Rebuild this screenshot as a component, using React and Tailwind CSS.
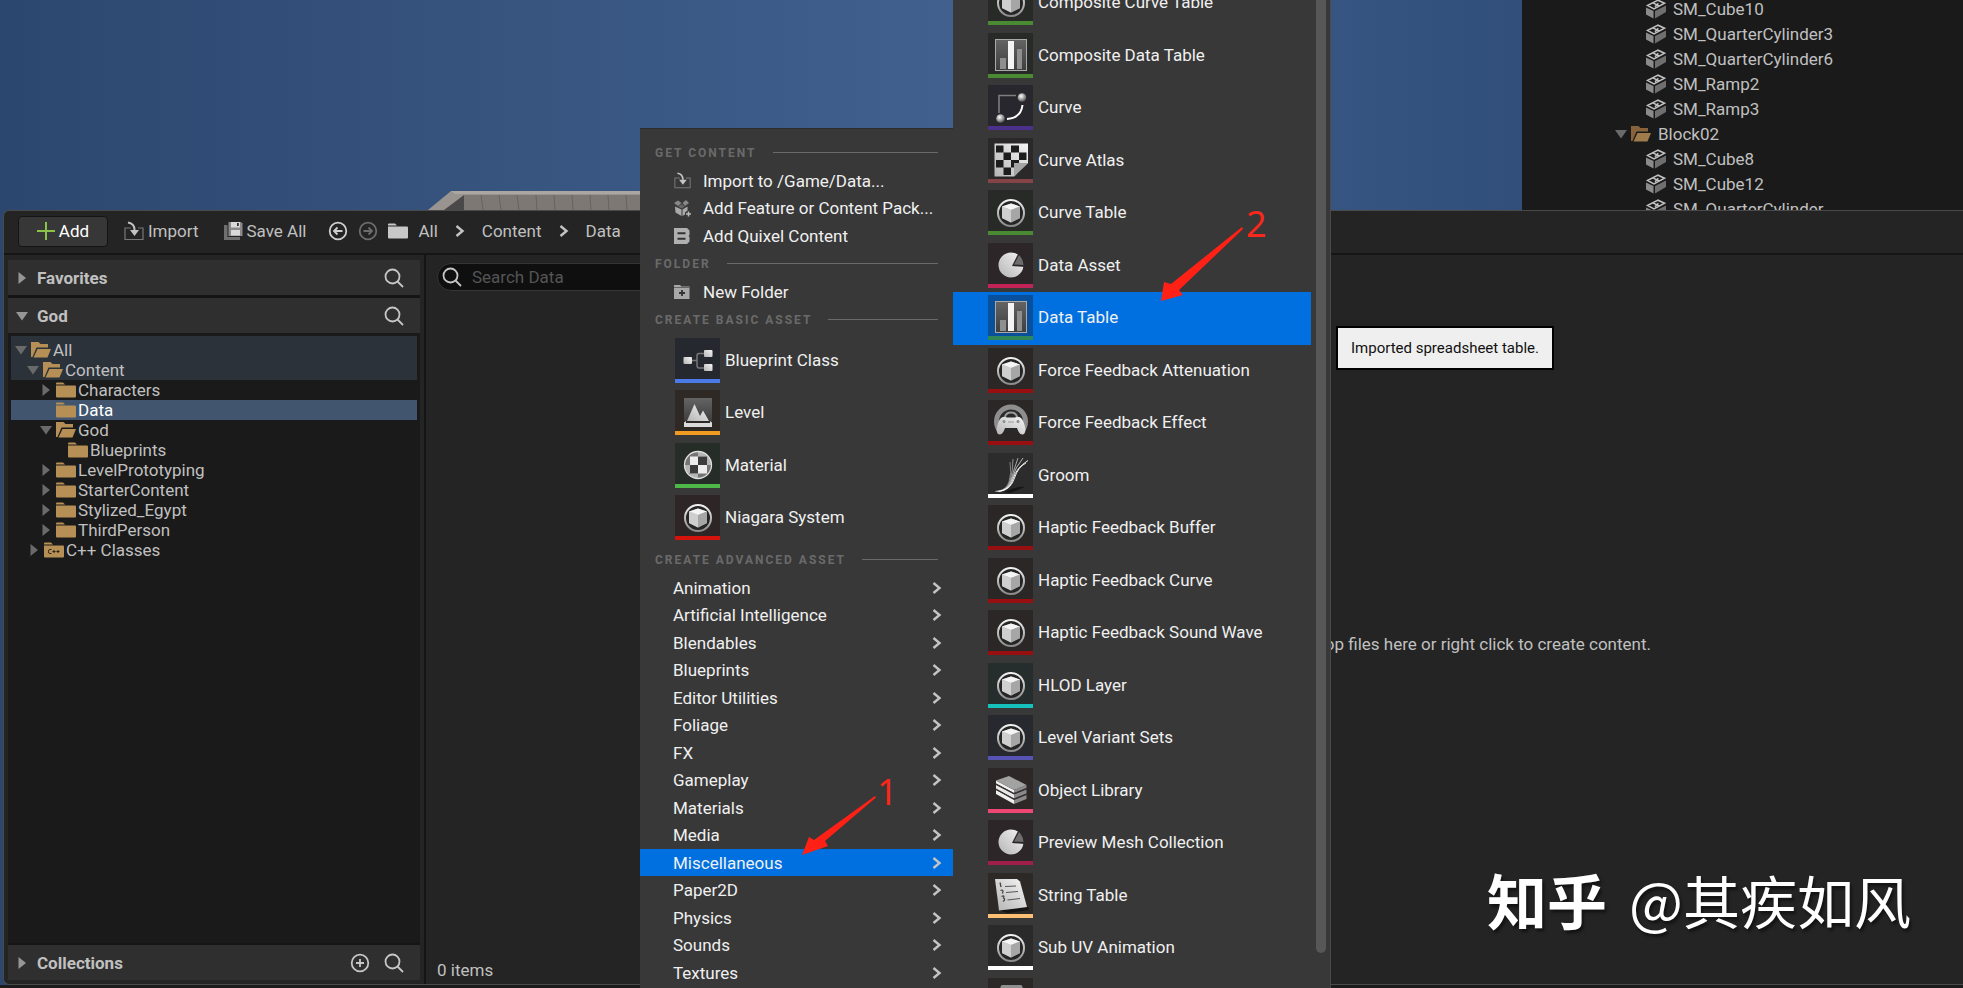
import React from "react";

const treeRows = [
  { name: "All", pad: "pl-1", state: "open", row: "h-6 pt-1 bg-[#2b323a]" },
  { name: "Content", pad: "pl-4", state: "open", row: "h-5 bg-[#2b323a]" },
  { name: "Characters", pad: "pl-[29px]", state: "closed", row: "h-5" },
  { name: "Data", pad: "pl-[29px]", state: "none", row: "h-5 bg-[#41566e] text-white" },
  { name: "God", pad: "pl-[29px]", state: "open", row: "h-5" },
  { name: "Blueprints", pad: "pl-[41px]", state: "none", row: "h-5" },
  { name: "LevelPrototyping", pad: "pl-[29px]", state: "closed", row: "h-5" },
  { name: "StarterContent", pad: "pl-[29px]", state: "closed", row: "h-5" },
  { name: "Stylized_Egypt", pad: "pl-[29px]", state: "closed", row: "h-5" },
  { name: "ThirdPerson", pad: "pl-[29px]", state: "closed", row: "h-5" },
  { name: "C++ Classes", pad: "pl-[17px]", state: "closed", row: "h-5", cpp: true },
];

const outlinerRows = [
  "SM_Cube10",
  "SM_QuarterCylinder3",
  "SM_QuarterCylinder6",
  "SM_Ramp2",
  "SM_Ramp3",
  "Block02",
  "SM_Cube8",
  "SM_Cube12",
  "SM_QuarterCylinder",
];

const basicAssets = [
  { name: "Blueprint Class", glyph: "blueprint", color: "#4a7be8", bg: "#26282f" },
  { name: "Level", glyph: "level", color: "#f09c22", bg: "#2f2926" },
  { name: "Material", glyph: "material", color: "#4db748", bg: "#262c28" },
  { name: "Niagara System", glyph: "cube", color: "#d4140c", bg: "#2e2526" },
];

const advancedAssets = [
  "Animation",
  "Artificial Intelligence",
  "Blendables",
  "Blueprints",
  "Editor Utilities",
  "Foliage",
  "FX",
  "Gameplay",
  "Materials",
  "Media",
  "Miscellaneous",
  "Paper2D",
  "Physics",
  "Sounds",
  "Textures",
];

const miscAssets = [
  { name: "Composite Curve Table", glyph: "cube", color: "#4a8a33", bg: "#272a27" },
  { name: "Composite Data Table", glyph: "chart", color: "#4a8a33", bg: "#272a27" },
  { name: "Curve", glyph: "curve", color: "#4b308c", bg: "#28272d" },
  { name: "Curve Atlas", glyph: "atlas", color: "#844346", bg: "#2a2828" },
  { name: "Curve Table", glyph: "cube", color: "#4a8a33", bg: "#272a27" },
  { name: "Data Asset", glyph: "pie", color: "#c22458", bg: "#2c2628" },
  { name: "Data Table", glyph: "chart", color: "#2f8659", bg: "#08509b" },
  { name: "Force Feedback Attenuation", glyph: "cube", color: "#980f12", bg: "#2b2727" },
  { name: "Force Feedback Effect", glyph: "gamepad", color: "#980f12", bg: "#2b2727" },
  { name: "Groom", glyph: "groom", color: "#ffffff", bg: "#2c2c2c" },
  { name: "Haptic Feedback Buffer", glyph: "cube", color: "#980f12", bg: "#2b2727" },
  { name: "Haptic Feedback Curve", glyph: "cube", color: "#980f12", bg: "#2b2727" },
  { name: "Haptic Feedback Sound Wave", glyph: "cube", color: "#980f12", bg: "#2b2727" },
  { name: "HLOD Layer", glyph: "cube", color: "#17c1bb", bg: "#262d2d" },
  { name: "Level Variant Sets", glyph: "cube", color: "#5653b5", bg: "#28282f" },
  { name: "Object Library", glyph: "stack", color: "#ee4773", bg: "#2e2728" },
  { name: "Preview Mesh Collection", glyph: "pie", color: "#a01f4a", bg: "#2c2628" },
  { name: "String Table", glyph: "paper", color: "#fcbf74", bg: "#2d2926" },
  { name: "Sub UV Animation", glyph: "cube", color: "#ffffff", bg: "#2a2a2a" },
  { name: "", glyph: "block", color: "#ffffff", bg: "#2c2727" },
];

const glyphs = {
  cube: (
    <>
      <circle cx="23" cy="23" r="13" fill="#262626" stroke="url(#ring)" strokeWidth="2" />
      <path d="M23 13.5 32 16.5V28L23 32.5 14 28V16.5Z" fill="#b9b9b9" />
      <path d="M23 13.5 32 16.5 23 20 14 16.5Z" fill="#f4f4f4" />
      <path d="M14 16.5 23 20V32.5L14 28Z" fill="#cfcfcf" />
      <path d="M32 16.5 23 20V32.5L32 28Z" fill="#a6a6a6" />
    </>
  ),
  chart: (
    <>
      <rect x="7.5" y="6.5" width="31" height="31" fill="url(#panel)" stroke="#a9a9a9" />
      <rect x="12" y="25" width="6" height="11" fill="#8f8f8f" />
      <rect x="20" y="8" width="6" height="28" fill="#f4f4f4" />
      <rect x="29" y="16" width="5" height="20" fill="#8f8f8f" />
    </>
  ),
  curve: (
    <>
      <path d="M11 28V10.5H28" fill="none" stroke="#7d7d7d" strokeWidth="1.6" />
      <path d="M19 34Q33 33 34.5 20" fill="none" stroke="#fff" strokeWidth="2" />
      <circle cx="34" cy="12.5" r="4.3" fill="url(#ball)" />
      <circle cx="12.5" cy="33.5" r="4.3" fill="url(#ball)" />
    </>
  ),
  atlas: (
    <>
      <path d="M6.5 5.5H40V25L26 38.5H6.5Z" fill="url(#sheet)" />
      <path d="M8 7.5h7.5v7H8zM23 7.5h8v7h-8zM15.5 14.5H23V22h-7.5zM31 14.5h7.5V22H31zM8 22h7.5v7.5H8zM23 22h8v7.5h-8zM15.5 29.5H23V37h-7.5z" fill="#1d1d1d" />
      <path d="M26 38.5V25H40Z" fill="#a5a5a5" />
    </>
  ),
  pie: (
    <>
      <circle cx="23" cy="22" r="12.5" fill="url(#sheet)" />
      <path d="M24 23 31 9 37 13V24Z" fill="#2b2628" />
      <path d="M26 21.5 31 12Q35 16 35.5 22Z" fill="#6d6d6d" />
    </>
  ),
  gamepad: (
    <>
      <circle cx="23" cy="21.5" r="14.5" fill="#2a2a2a" stroke="#8e8e8e" strokeWidth="5" />
      <path d="M8 31H38V41H8Z" fill="#2b2727" />
      <path d="M17 17Q18 12.5 23 12.5T29 17" fill="none" stroke="#9a9a9a" strokeWidth="2" />
      <path d="M13 18Q16 16 19 17.5H27Q30 16 33 18Q36 21 37.5 29Q37.5 34.5 34 34.5Q31 34 29 28H17Q15 34 12 34.5Q8.5 34.5 8.5 29Q10 21 13 18Z" fill="url(#sheet)" />
      <circle cx="16" cy="21.5" r="1.5" fill="#8c8c8c" />
      <circle cx="30" cy="21.5" r="1.5" fill="#8c8c8c" />
      <path d="M20 22h6" stroke="#9b9b9b" />
    </>
  ),
  groom: (
    <g fill="none">
      <path d="M16 39Q27 33 37 34Q30 37 22 40Z" fill="#161616" />
      <path d="M7 38.5Q18 38 21 29T22 9" stroke="#999" strokeWidth=".8" />
      <path d="M8 38.5Q19 38 22 28T25 6" stroke="#aaa" strokeWidth=".8" />
      <path d="M9 38.5Q20 38 23 27T30 5" stroke="#c4c4c4" strokeWidth=".8" />
      <path d="M10 38.5Q21 37.5 24 26T35 5" stroke="#ddd" strokeWidth=".8" />
      <path d="M11 38.5Q22 37 25 26T40 7.5" stroke="#fff" strokeWidth=".9" />
      <path d="M13 38Q23 36 26.5 25T38 10" stroke="#fff" strokeWidth=".9" />
    </g>
  ),
  stack: (
    <>
      <path d="M8 26 26 36V32L8 22Z" fill="#efefef" />
      <path d="M26 36 38.5 31V27L26 32Z" fill="#8a8a8a" />
      <path d="M8 20.5 26 30.5V26.5L8 17Z" fill="#e8e8e8" />
      <path d="M26 30.5 38.5 25.5V21.5L26 26.5Z" fill="#8a8a8a" />
      <path d="M8 15.5 26 25V22L8 12.5Z" fill="#f1f1f1" />
      <path d="M26 25 38.5 20V17L26 22Z" fill="#8a8a8a" />
      <path d="M8 12.5 21 8 38.5 17 26 22Z" fill="#a2a2a2" />
      <path d="M8 16 26 25.5 38.5 20.5M8 21.5 26 31 38.5 26" fill="none" stroke="#3a3536" />
    </>
  ),
  paper: (
    <>
      <path d="M11 37.5 40 34 41 37 20 40Z" fill="#151515" />
      <path d="M7 6H29L32 8.5 39 34 11 37.5Z" fill="url(#sheet)" />
      <path d="M17 13.5 28 13M18 19.5 30 18.5M19.5 27 32 25.5" stroke="#555" />
      <path d="M12 9.5 13 14M12.5 17.5Q16 16 14.5 20.5M13.5 23.5Q17 22 15.5 25Q18 26.5 15 28.5" fill="none" stroke="#444" strokeWidth="1.3" />
    </>
  ),
  blueprint: (
    <>
      <path d="M17 22.5H22M30 15.5H24Q22 15.5 22 18V27Q22 30 24 30H30" fill="none" stroke="#777" strokeWidth="1.5" />
      <rect x="8.5" y="19" width="8.5" height="7" rx="1" fill="url(#sheet)" />
      <rect x="29" y="12" width="8.5" height="7" rx="1" fill="url(#sheet)" />
      <rect x="29" y="26" width="8.5" height="7" rx="1" fill="url(#sheet)" />
    </>
  ),
  level: (
    <>
      <rect x="9" y="8" width="28" height="23" fill="url(#panel)" />
      <path d="M12 31 19.5 14 25 26 28 20.5 34 31Z" fill="url(#sheet)" />
      <path d="M9 32.5 11 31V33H35V31L37 32.5V37H9Z" fill="#dadada" />
    </>
  ),
  material: (
    <>
      <clipPath id="sphere">
        <circle cx="23" cy="22" r="13.5" />
      </clipPath>
      <g clipPath="url(#sphere)">
        <rect x="9" y="8" width="28" height="28" fill="#747474" />
        <path d="M15 13.5h8V22h-8zM23 22h9v8.5h-9z" fill="#ededed" />
        <path d="M23 13.5h9V22h-9zM15 22h8v8.5h-8z" fill="#3c3c3c" />
        <path d="M9 22h6v8.5H9zM23 8h9v5.5h-9zM15 30.5h8V36h-8zM32 13.500h6V22h-6z" fill="#b5b5b5" />
      </g>
      <circle cx="23" cy="22" r="13.5" fill="none" stroke="#dedede" strokeWidth="1.3" />
    </>
  ),
  block: <rect x="12.5" y="7" width="22" height="30" rx="2" fill="#8f8f8f" />,
};

const Thumb = ({ glyph, color, bg }) => (
  <svg width="45" height="45" viewBox="0 0 45 45" className="shrink-0" aria-hidden="true">
    <rect width="45" height="45" fill={bg} />
    {glyphs[glyph]}
    <rect y="41" width="45" height="4" fill={color} />
  </svg>
);

// shared gradients for the asset glyphs
const Gradients = () => (
  <svg className="absolute size-0" aria-hidden="true">
    <defs>
      <linearGradient id="ring" x1="0" y1="0" x2="0" y2="1">
        <stop offset="0" stopColor="#f2f2f2" />
        <stop offset="1" stopColor="#8a8a8a" />
      </linearGradient>
      <linearGradient id="panel" x1="0" y1="0" x2="0" y2="1">
        <stop offset="0" stopColor="#646464" />
        <stop offset="1" stopColor="#3e3e3e" />
      </linearGradient>
      <linearGradient id="sheet" x1="1" y1="0" x2="0" y2="1">
        <stop offset="0" stopColor="#f6f6f6" />
        <stop offset="1" stopColor="#b4b4b4" />
      </linearGradient>
      <radialGradient id="ball" cx=".4" cy=".35" r=".7">
        <stop offset="0" stopColor="#fff" />
        <stop offset="1" stopColor="#4a4a4a" />
      </radialGradient>
    </defs>
  </svg>
);

const Triangle = ({ state, color = "#6a6a6a" }) => (
  <svg width="12" height="12" viewBox="0 0 12 12" className="shrink-0" aria-hidden="true">
    {state === "open" && <path d="M0 2H12L6 10.5Z" fill={color} />}
    {state === "closed" && <path d="M2.5 0 10 6 2.5 12Z" fill={color} />}
  </svg>
);

const Folder = ({ open, cpp, color = "#b58f55", back = "#b58f55" }) => (
  <svg width="20" height="16" viewBox="0 0 20 16" className="shrink-0" aria-hidden="true">
    {open ? (
      <>
        <path d="M0 15V0H7.5L9.5 2H17V5.5H5.5L1.5 15Z" fill={back} />
        <path d="M6.5 7H20L16.5 15.5H2.5Z" fill={color} />
      </>
    ) : (
      <>
        <path d="M0 2.5V1.5Q0 .5 1 .5H7L9 2.5Z" fill={color} />
        <path d="M0 3.5H19Q20 3.5 20 4.5V14.5Q20 15.5 19 15.5H1Q0 15.5 0 14.5Z" fill={color} />
      </>
    )}
    {cpp && (
      <path
        d="M7.5 7.5H5.5Q4.5 7.5 4.5 9.5T5.5 11.500H7.5M8.5 9.5h3M10 8v3M12.500 9.5h3M14 8v3"
        fill="none"
        stroke="#2b2113"
      />
    )}
  </svg>
);

const SearchIcon = () => (
  <svg width="20" height="20" viewBox="0 0 20 20" fill="none" stroke="#c6c6c6" strokeWidth="1.8" aria-hidden="true">
    <circle cx="8.5" cy="8.5" r="7" />
    <path d="M13.5 13.5 19 19" />
  </svg>
);

const CircleArrow = ({ flip, color }) => (
  <svg width="20" height="20" viewBox="0 0 20 20" fill="none" stroke={color} strokeWidth="1.8" aria-hidden="true">
    <circle cx="10" cy="10" r="8.3" />
    {flip ? <path d="M5.5 10H14M10.5 6.5 14 10 10.5 13.5" /> : <path d="M14.5 10H6M9.5 6.5 6 10 9.5 13.5" />}
  </svg>
);

const Chevron = () => (
  <svg width="10" height="12" viewBox="0 0 10 12" fill="none" stroke="#c4c4c4" strokeWidth="2.4" className="shrink-0" aria-hidden="true">
    <path d="M1.5 1 7.5 6 1.5 11" />
  </svg>
);

const ImportIcon = ({ size }) => (
  <svg width={size} height={size} viewBox="0 0 20 20" fill="none" className="shrink-0" aria-hidden="true">
    <path d="M7 7H1V18.5H19V7H14" stroke="#777" strokeWidth="1.2" />
    <path d="M4 1.5Q10.5 2.5 10.5 9" stroke="#c4c4c4" strokeWidth="2" />
    <path d="M6 9H15L10.5 15Z" fill="#c4c4c4" />
  </svg>
);

const SaveIcon = () => (
  <svg width="19" height="20" viewBox="0 0 19 20" aria-hidden="true">
    <path d="M0 4H3.5V16H16V19H0Z" fill="#6f6f6f" />
    <path d="M4.5 1H17L18.5 2.5V15H4.5Z" fill="#8a8a8a" />
    <path d="M7 1H16V6.5H7ZM7 9H16V14.5H7Z" fill="#dadada" />
    <path d="M13 2h1.8v3H13z" fill="#333" />
  </svg>
);

const MeshIcon = () => (
  <svg width="20" height="20" viewBox="0 0 20 20" className="shrink-0" aria-hidden="true">
    <path d="M0 8.5 7.5 12V19.5L0 15.5Z" fill="#8b8b8b" />
    <path d="M9 12 20 6.500V13L9 19.5Z" fill="#6f6f6f" />
    <path d="M1.500 6.500 12 1.200 18.500 4.200 8 9.800ZM6.800 3.900 13.300 7M9 7.800 12.300 4.200" fill="none" stroke="#c0c0c0" strokeWidth="1.500" />
  </svg>
);

const PackIcon = () => (
  <svg width="17" height="17" viewBox="0 0 17 17" className="shrink-0" aria-hidden="true">
    <path d="M1 6.5 7.5 9.5V16L1.5 12.5ZM8.5 9.5 13.5 6.5V10.5L11 12.5V14.5L8.5 16Z" fill="#a9a9a9" />
    <path d="M0 3 4 .5 7.5 3 4 6ZM8.5 3 12 0 15 3 11 6Z" fill="#888" />
    <path d="M4 6.5 7.5 8.5 11 6.5 7.5 4Z" fill="#666" />
    <path d="M12 14h5M14.5 11.5v5" stroke="#bbb" strokeWidth="1.5" />
  </svg>
);

const QuixelIcon = () => (
  <svg width="16" height="16" viewBox="0 0 16 16" className="shrink-0" aria-hidden="true">
    <path d="M0 0H13L15.5 2.5V7L14.5 8 15.5 9V13.5L13 16H0Z" fill="#b0b0b0" />
    <path d="M3.5 5.3H11.5M3.5 10.7H11.5" stroke="#333" strokeWidth="2" />
  </svg>
);

const NewFolderIcon = () => (
  <svg width="16" height="16" viewBox="0 0 16 16" className="shrink-0" aria-hidden="true">
    <path d="M0 1H6L7.5 2.5H15.5V15H0Z" fill="#a8a8a8" />
    <path d="M0 3.5H15.5" stroke="#555" strokeWidth=".8" />
    <path d="M5 9h6M8 6v6" stroke="#333" strokeWidth="1.8" />
  </svg>
);

const Outliner = () => (
  <aside className="w-[441px] shrink-0 overflow-hidden bg-[#1a1a1a] pl-[93px]">
    <ul className="-mt-1">
      {outlinerRows.map((name) =>
        name === "Block02" ? (
          <li key={name} className="flex h-[25px] items-center">
            <Triangle state="open" />
            <span className="ml-1 mr-[7px] flex">
              <Folder open color="#a07b4b" back="#86633a" />
            </span>
            {name}
          </li>
        ) : (
          <li key={name} className="flex h-[25px] items-center gap-[7px] pl-[31px]">
            <MeshIcon />
            {name}
          </li>
        )
      )}
    </ul>
  </aside>
);

const Viewport = () => (
  <div className="flex flex-1 items-end overflow-hidden pl-[428px]">
    <svg width="230" height="20" viewBox="0 0 230 20" aria-hidden="true">
      <path d="M0 20 23 1H230V20Z" fill="#9a9490" />
      <path d="M16 20 36 5V20Z" fill="#4b4849" />
      <path d="M36 5H230V20H36Z" fill="#7d7873" />
      <path d="M53 5 55 20M71 5 73 20M89 5 91 20M108 5 109 20M126 5 127 20M144 5 145 20M162 5 163 20M180 5 181 20M198 5 199 20" stroke="#67635f" />
      <path d="M23 1H230V4H27Z" fill="#aca6a1" />
    </svg>
  </div>
);

const SectionHeader = ({ title, state, children }) => (
  <div className="flex h-[35px] items-center bg-[#2f2f2f] pl-2 pr-4">
    <button className="flex items-center gap-2 font-bold">
      <Triangle state={state} color="#969696" />
      <span className="pl-px">{title}</span>
    </button>
    <div className="ml-auto flex items-center gap-3.5">
      {children}
      <button aria-label={`Search ${title}`}>
        <SearchIcon />
      </button>
    </div>
  </div>
);

const Sidebar = () => (
  <aside className="flex w-[412px] shrink-0 flex-col bg-[#151515]">
    <SectionHeader title="Favorites" state="closed" />
    <div className="h-[3px]" />
    <SectionHeader title="God" state="open" />
    <ul className="flex-1 bg-[#1a1a1a] px-[3px] pt-[3px]">
      {treeRows.map((r) => (
        <li key={r.name} className={r.row}>
          <button className={`flex h-5 w-full items-center ${r.pad}`}>
            <Triangle state={r.state} />
            <span className="ml-1 mr-0.5 flex">
              <Folder open={r.state === "open"} cpp={r.cpp} />
            </span>
            {r.name}
          </button>
        </li>
      ))}
    </ul>
    <div className="h-0.5" />
    <SectionHeader title="Collections" state="closed">
      <button aria-label="Add collection">
        <svg width="20" height="20" viewBox="0 0 20 20" fill="none" stroke="#c6c6c6" strokeWidth="1.8" aria-hidden="true">
          <circle cx="10" cy="10" r="8.3" />
          <path d="M6 10h8M10 6v8" />
        </svg>
      </button>
    </SectionHeader>
  </aside>
);

const Toolbar = () => (
  <div className="flex h-11 shrink-0 items-center border-b-2 border-[#151515] pb-0.5 pl-3.5">
    <button className="flex h-[31px] w-[90px] items-center justify-center gap-1 rounded border border-[#141414] bg-[#373737] text-white">
      <svg width="18" height="18" viewBox="0 0 18 18" stroke="#8bc24a" strokeWidth="2" aria-hidden="true">
        <path d="M0 9H18M9 0V18" />
      </svg>
      Add
    </button>
    <button className="ml-4 flex items-center gap-1">
      <ImportIcon size="20" />
      Import
    </button>
    <button className="ml-[25px] flex items-center gap-1">
      <SaveIcon />
      Save All
    </button>
    <button className="ml-[22px]" aria-label="Back">
      <CircleArrow color="#d0d0d0" />
    </button>
    <button className="ml-2.5" aria-label="Forward">
      <CircleArrow flip color="#6c6c6c" />
    </button>
    <span className="ml-2.5">
      <Folder color="#c8c8c8" />
    </span>
    <nav className="flex items-center">
      <a href="#all" className="ml-2.5 mr-[17px]">All</a>
      <Chevron />
      <a href="#content" className="mx-[17px]">Content</a>
      <Chevron />
      <a href="#data" className="mx-[17px]">Data</a>
    </nav>
  </div>
);

const ContentBrowser = () => (
  <main className="mb-[3px] ml-[3px] flex min-h-0 flex-1 flex-col rounded-l-md border border-r-0 border-[#4a4a4a] bg-[#242424]">
    <Toolbar />
    <div className="flex min-h-0 flex-1 pl-1 pt-[5px]">
      <div className="flex pb-1">
        <Sidebar />
      </div>
      <section className="-mt-[5px] ml-1 flex flex-1 flex-col border-l-2 border-[#151515] pl-[11px]">
        <label className="mt-2 flex h-7 w-[600px] items-center gap-2.5 rounded-full border border-[#353535] bg-[#0f0f0f] px-1">
          <SearchIcon />
          <input
            type="text"
            aria-label="Search Data"
            placeholder="Search Data"
            className="flex-1 bg-transparent outline-none placeholder:text-[#555555]"
          />
        </label>
        <div className="flex flex-1 items-center justify-end pr-[312px] pt-[38px]">
          Drop files here or right click to create content.
        </div>
        <div className="pb-0.5 leading-6">0 items</div>
      </section>
    </div>
  </main>
);

const MenuHeading = ({ children }) => (
  <h3 className="flex h-[29px] items-center gap-4 px-[15px] text-xs font-bold tracking-[2px] text-[#6a6a6a]">
    {children}
    <span className="h-px flex-1 bg-[#6a6a6a]" />
  </h3>
);

const MenuItem = ({ icon, children }) => (
  <li className="odd:h-[27px] even:h-7">
    <button className="flex size-full items-center pl-[34px]">
      <span className="w-[29px]">{icon}</span>
      {children}
    </button>
  </li>
);

const AssetButton = ({ asset }) => (
  <button className="flex items-center gap-[5px]" aria-label={asset.name || "Asset"}>
    <Thumb {...asset} />
    <span className="pb-0.5">{asset.name}</span>
  </button>
);

const ContextMenu = () => (
  <div className="absolute bottom-0 left-[640px] top-32 w-[313px] overflow-hidden border-t border-[#2c2c2c] bg-[#383838] pt-[9px] text-[#f0f0f0]">
    <MenuHeading>GET CONTENT</MenuHeading>
    <ul>
      <MenuItem icon={<ImportIcon size="17" />}>Import to /Game/Data...</MenuItem>
      <MenuItem icon={<PackIcon />}>Add Feature or Content Pack...</MenuItem>
      <MenuItem icon={<QuixelIcon />}>Add Quixel Content</MenuItem>
    </ul>
    <MenuHeading>FOLDER</MenuHeading>
    <ul>
      <MenuItem icon={<NewFolderIcon />}>New Folder</MenuItem>
    </ul>
    <MenuHeading>CREATE BASIC ASSET</MenuHeading>
    <ul className="pt-px">
      {basicAssets.map((a) => (
        <li key={a.name} className="pl-[35px] pt-[3px] odd:h-[52px] even:h-[53px]">
          <AssetButton asset={a} />
        </li>
      ))}
    </ul>
    <MenuHeading>CREATE ADVANCED ASSET</MenuHeading>
    <ul>
      {advancedAssets.map((name) => (
        <li key={name} className={`odd:h-[27px] even:h-7 ${name === "Miscellaneous" ? "bg-[#0070e0]" : ""}`}>
          <button className="flex size-full items-center justify-between pl-[33px] pr-[11px]">
            {name}
            <Chevron />
          </button>
        </li>
      ))}
    </ul>
  </div>
);

const AssetSubmenu = () => (
  <div className="absolute inset-y-0 left-[953px] flex w-[378px] overflow-hidden border-r border-[#4a4a4a] bg-[#383838] text-[#f0f0f0]">
    <ul className="-mt-[23px] flex-1">
      {miscAssets.map((a) => (
        <li key={a.color + a.name} className={`pl-[35px] pt-[3px] odd:h-[53px] even:h-[52px] ${a.name === "Data Table" ? "bg-[#0070e0]" : ""}`}>
          <AssetButton asset={a} />
        </li>
      ))}
    </ul>
    <div className="mb-[35px] ml-[5px] mr-1 w-2.5 rounded-b-full bg-[#575757]" />
  </div>
);

const Annotations = () => (
  <>
    <svg className="absolute left-[800px] top-[794px]" width="78" height="62" viewBox="0 0 78 62" aria-hidden="true">
      <path d="M75 2 76 3.5 25 47 28 52 2 61 9 43 14 46Z" fill="#ff2115" />
    </svg>
    <span className="absolute left-[877px] top-[768px] text-4xl/12 text-[#f9281c] font-['Noto_Sans']">1</span>
    <svg className="absolute left-[1160px] top-[226px]" width="84" height="76" viewBox="0 0 84 76" aria-hidden="true">
      <path d="M82 1 83 3 19 64 23 69 1 75 4 56 11 58Z" fill="#ff2115" />
    </svg>
    <span className="absolute left-[1246px] top-[200px] text-4xl/12 text-[#f9281c] font-['Noto_Sans']">2</span>
  </>
);

const App = () => (
  <div className="relative flex h-screen flex-col overflow-hidden bg-[#1a1a1a] bg-linear-to-r from-[#2c476f] via-[#42618f] via-50% to-[#24406a] font-[Roboto,sans-serif] text-[17px]/5 text-[#c0c0c0]">
    <Gradients />
    <div className="flex h-[210px] shrink-0">
      <Viewport />
      <Outliner />
    </div>
    <ContentBrowser />
    <div className="absolute inset-x-0 bottom-0 h-[3px] bg-[#1c1c1c]" />
    <ContextMenu />
    <AssetSubmenu />
    <div role="tooltip" className="absolute left-[1336px] top-[326px] border-2 border-black bg-[#efefef] px-[13px] py-[10px] text-[15px]/5 text-[#111111]">
      Imported spreadsheet table.
    </div>
    <Annotations />
    <div className="absolute bottom-[49px] right-[52px] flex items-center gap-[22px] text-[57px]/[80px] text-white [text-shadow:2px_3px_3px_rgba(0,0,0,0.5)] font-['Noto_Sans_CJK_SC',sans-serif]">
      <span className="text-[60px]/[80px] font-bold">知乎</span>
      <span>@其疾如风</span>
    </div>
  </div>
);

export default App;
